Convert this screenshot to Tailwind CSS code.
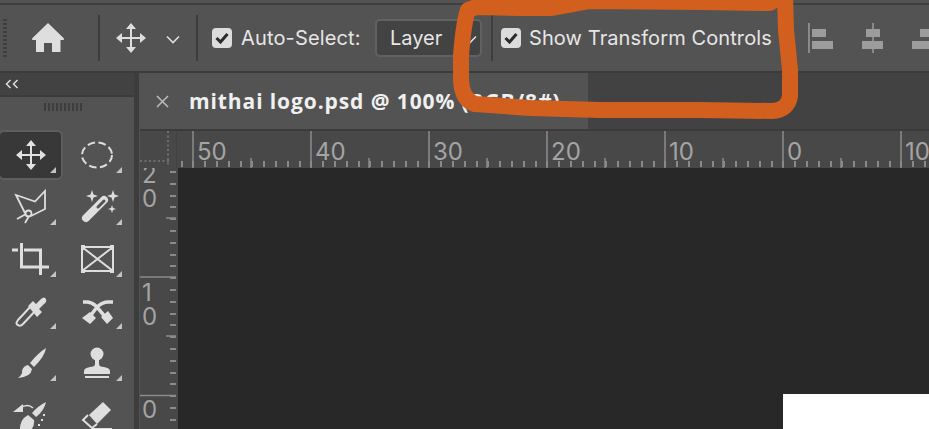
<!DOCTYPE html>
<html>
<head>
<meta charset="utf-8">
<script src="https://cdn.jsdelivr.net/npm/@tailwindcss/browser@4"></script>
</head>
<body class="m-0 bg-[#535353]">
<div class="relative w-[929px] h-[429px] overflow-hidden flex flex-col bg-[#535353] font-['Inter','Liberation_Sans',sans-serif] text-[#e6e6e6]">

  <!-- top strip -->
  <div class="h-[3px] shrink-0 bg-[#535353]"></div>
  <div class="h-[2px] shrink-0 bg-[#3f3f3f]"></div>

  <!-- options bar -->
  <div class="h-[66px] shrink-0 flex items-center bg-[#535353] border-b-2 border-[#3b3b3b] box-content">
    <div class="w-[4px] h-[38px] ml-[3px] shrink-0 bg-[repeating-linear-gradient(to_bottom,#3f3f3f_0,#3f3f3f_2px,transparent_2px,transparent_4px)]"></div>
    <div class="w-[91px] shrink-0 flex justify-start pl-[24px]">
      <svg width="34" height="32" viewBox="31 22 34 32"><path d="M48 23 L64 38.5 Q64.5 40 62.5 40 L60.5 40 L60.5 52 L52 52 L52 43 L44 43 L44 52 L36 52 L36 40 L33.5 40 Q31.5 40 32 38.500 Z" fill="#dedede"/></svg>
    </div>
    <div class="w-[2px] h-[46px] shrink-0 bg-[#3d3d3d]"></div>
    <div class="w-[96px] shrink-0 flex items-center pl-[16px]">
      <svg width="30" height="30" viewBox="0 0 30 30"><path d="M15 4V26M4 15H26" stroke="#dedede" stroke-width="2"/><path d="M15 0L20 6H10ZM15 30L20 24H10ZM0 15L6 10V20ZM30 15L24 10V20Z" fill="#dedede"/></svg>
      <svg class="ml-[20px] mt-[3px]" width="14" height="9" viewBox="0 0 14 9"><path d="M1 1.5L7 7.5L13 1.5" fill="none" stroke="#dedede" stroke-width="1.6"/></svg>
    </div>
    <div class="w-[2px] h-[46px] shrink-0 bg-[#3d3d3d]"></div>
    <div class="flex items-center ml-[14px] shrink-0">
      <span class="w-[20px] h-[20px] rounded-[4px] bg-[#dcdcdc] flex items-center justify-center"><svg width="14" height="12" viewBox="0 0 14 12"><path d="M1.5 6L5.5 10L12.5 2" fill="none" stroke="#2b2b2b" stroke-width="3"/></svg></span>
      <span class="ml-[9px] text-[20px] leading-none tracking-[0.15px] w-[134px]">Auto-Select:</span>
    </div>
    <div class="w-[107px] h-[38px] shrink-0 rounded-[5px] border-2 border-[#616161] bg-[#434343] flex items-center pl-[13px] text-[20px]">Layer
      <svg class="ml-[21px] mt-[3px]" width="14" height="9" viewBox="0 0 14 9"><path d="M1 1.5L7 7.5L13 1.5" fill="none" stroke="#dedede" stroke-width="1.6"/></svg>
    </div>
    <div class="w-[2px] h-[46px] ml-[9px] shrink-0 bg-[#3d3d3d]"></div>
    <div class="flex items-center ml-[8px] shrink-0">
      <span class="w-[20px] h-[20px] rounded-[4px] bg-[#dcdcdc] flex items-center justify-center"><svg width="14" height="12" viewBox="0 0 14 12"><path d="M1.5 6L5.5 10L12.5 2" fill="none" stroke="#2b2b2b" stroke-width="3"/></svg></span>
      <span class="ml-[8px] text-[20px] leading-none tracking-[0.1px] w-[279px] whitespace-nowrap">Show Transform Controls</span>
    </div>
    <svg class="shrink-0" width="121" height="32" viewBox="808 22 121 32">
      <path d="M808.2 23H809.7V53H808.2Z" fill="#9c9c9c"/><path d="M812 29H826V37H812ZM812 41H833V49H812Z" fill="#9c9c9c"/>
      <path d="M872.3 23H873.8V53H872.3Z" fill="#9c9c9c"/><path d="M866 29H880V37H866ZM862 41H883V49H862Z" fill="#9c9c9c"/>
      <path d="M920 29H929V37H920ZM912 41H929V49H912Z" fill="#9c9c9c"/>
    </svg>
  </div>

  <!-- workspace -->
  <div class="flex-1 min-h-0 flex">
    <!-- tools panel -->
    <div class="w-[134px] shrink-0 flex flex-col bg-[#535353]">
      <div class="h-[22px] shrink-0 bg-[#424242] border-b-2 border-[#3b3b3b] box-content flex items-center pl-[5px]">
        <svg width="14" height="10" viewBox="0 0 14 10"><path d="M5.5 1L1.5 5L5.5 9M12.5 1L8.5 5L12.5 9" fill="none" stroke="#dedede" stroke-width="1.5"/></svg>
      </div>
      <div class="h-[32px] shrink-0 flex justify-start pl-[44px] pt-[6px]">
        <div class="w-[38px] h-[8px] bg-[repeating-linear-gradient(to_right,#3d3d3d_0,#3d3d3d_2px,transparent_2px,transparent_4px)]"></div>
      </div>
      <div class="grid grid-cols-[66px_66px] auto-rows-[52px] text-[#dedede]">
        <!-- move -->
        <div class="relative">
          <div class="absolute left-[-2px] top-[1px] w-[65px] h-[50px] rounded-[6px] bg-[#383838] border-2 border-[#5e5e5e]"></div>
          <svg class="relative" width="66" height="52" viewBox="0 129 66 52"><path d="M31 144V166M20 155H42" stroke="#e2e2e2" stroke-width="2"/><path d="M31 140L36 146H26ZM31 170L36 164H26ZM16 155L22 150V160ZM46 155L40 150V160Z" fill="#e2e2e2"/><path d="M56 167V173H50Z" fill="#c4c4c4"/></svg>
        </div>
        <!-- ellipse marquee -->
        <svg width="66" height="52" viewBox="66 129 66 52"><ellipse cx="97" cy="155" rx="15" ry="12.5" fill="none" stroke="#dedede" stroke-width="2" stroke-dasharray="7.5 3.5"/><path d="M122 167V173H116Z" fill="#c4c4c4"/></svg>
        <!-- poly lasso -->
        <svg width="66" height="52" viewBox="0 181 66 52"><path d="M25 213 L16 195 L35 201.5 L45 191 V209 L31 216" fill="none" stroke="#dedede" stroke-width="1.8"/><circle cx="28.500" cy="213.500" r="3" fill="none" stroke="#dedede" stroke-width="1.8"/><path d="M26 214L17 219M29 216L25 223" stroke="#dedede" stroke-width="1.8"/><path d="M56 219V225H50Z" fill="#c4c4c4"/></svg>
        <!-- wand -->
        <svg width="66" height="52" viewBox="66 181 66 52"><path d="M86 218L104 200" stroke="#dedede" stroke-width="8" stroke-linecap="round"/><path d="M98 207L104 201" stroke="#535353" stroke-width="3" stroke-linecap="round"/><path d="M92 190L93.500 194.500L98 196L93.500 197.500L92 202L90.500 197.500L86 196L90.500 194.500ZM113 190L114.500 194.500L119 196L114.500 197.500L113 202L111.500 197.500L107 196L111.500 194.500ZM112 205L113 208L116 209L113 210L112 213L111 210L108 209L111 208Z" fill="#dedede"/><path d="M122 219V225H116Z" fill="#c4c4c4"/></svg>
        <!-- crop -->
        <svg width="66" height="52" viewBox="0 233 66 52"><path d="M12 250H18M21.500 243V267H41M24 250H40.500V275M42 267H49" fill="none" stroke="#dedede" stroke-width="3"/><path d="M56 271V277H50Z" fill="#c4c4c4"/></svg>
        <!-- frame -->
        <svg width="66" height="52" viewBox="66 233 66 52"><path d="M82 247H113V271H82ZM82 247L113 271M113 247L82 271" fill="none" stroke="#dedede" stroke-width="2"/><path d="M81 245h4v4h-4zM110 245h4v4h-4zM81 269h4v4h-4zM110 269h4v4h-4z" fill="#dedede"/><path d="M122 271V277H116Z" fill="#c4c4c4"/></svg>
        <!-- eyedropper -->
        <svg width="66" height="52" viewBox="0 285 66 52"><path d="M32 305 L18 320 Q15 324 18 325 Q20 327 23 324 L37 309" fill="none" stroke="#dedede" stroke-width="2"/><path d="M28 306L33 301L36 304L41 299Q44 296 46 299Q47 302 44 304L39 309L42 312L37 317Z" fill="#dedede"/><path d="M56 323V329H50Z" fill="#c4c4c4"/></svg>
        <!-- shuffle -->
        <svg width="66" height="52" viewBox="66 285 66 52"><path d="M83 302H87C95 302 99 310 106 318M113 302H108C100 302 96 308 89 318" fill="none" stroke="#dedede" stroke-width="3.500"/><path d="M113 318L108 311L101 317L107 324ZM82 318L90 312L96 318L90 324Z" fill="#dedede"/><path d="M122 323V329H116Z" fill="#c4c4c4"/></svg>
        <!-- brush -->
        <svg width="66" height="52" viewBox="0 337 66 52"><path d="M46 348Q45 356 34 367L30 363Q38 353 46 348Z" fill="#dedede"/><path d="M28 365L32 369Q31 377 18 378Q23 374 22 371Q23 366 28 365Z" fill="#dedede"/><path d="M56 375V381H50Z" fill="#c4c4c4"/></svg>
        <!-- stamp -->
        <svg width="66" height="52" viewBox="66 337 66 52"><circle cx="97" cy="354" r="6.500" fill="#dedede"/><path d="M95 358H99V364Q99 367 104 367Q110 368 110 371V374H84V371Q84 368 90 367Q95 367 95 364Z" fill="#dedede"/><path d="M85 376H109V378H85Z" fill="#dedede"/><path d="M122 375V381H116Z" fill="#c4c4c4"/></svg>
        <!-- history brush -->
        <svg width="66" height="52" viewBox="0 389 66 52"><path d="M46 402Q44 411 36 417L32 413Q38 406 46 402Z" fill="#dedede"/><path d="M28 415L34 420Q35 428 28 432H20Q19 420 28 415Z" fill="#dedede"/><path d="M13 412L23 404V412Z" fill="#dedede"/><path d="M20 408Q28 403 33 408" fill="none" stroke="#dedede" stroke-width="1.500"/><path d="M43 414h2v2h-2zM41 419h2v2h-2zM38 424h2v2h-2z" fill="#dedede"/></svg>
        <!-- eraser -->
        <svg width="66" height="52" viewBox="66 389 66 52"><path d="M103 402L111 410L97 424L89 415Z" fill="#dedede"/><path d="M88 415L83 420L92 428L97 424" fill="none" stroke="#dedede" stroke-width="2"/><path d="M92 428H112V432H92Z" fill="#dedede"/></svg>
      </div>
    </div>

    <!-- splitter -->
    <div class="w-[5px] shrink-0 bg-[#3d3d3d]"></div>
    <div class="w-px shrink-0 bg-[#535353]"></div>

    <!-- document -->
    <div class="flex-1 min-w-0 flex flex-col">
      <div class="h-[56px] shrink-0 bg-[#424242] flex">
        <div class="w-[448px] h-full bg-[#535353] flex items-center">
          <svg class="ml-[16px] mr-[20px]" width="13" height="13" viewBox="0 0 13 13"><path d="M1 1L12 12M12 1L1 12" stroke="#bdbdbd" stroke-width="1.500"/></svg>
          <span class="text-[21px] tracking-[0.9px] font-bold leading-none text-[#f0f0f0] whitespace-nowrap font-['Open_Sans','Liberation_Sans',sans-serif]">mithai logo.psd @ 100% (RGB/8#)</span>
        </div>
      </div>
      <div class="h-[2px] shrink-0 bg-[#3b3b3b]"></div>
      <!-- horizontal ruler -->
      <svg class="block shrink-0" width="789" height="37" viewBox="140 131 789 37">
        <rect x="140" y="131" width="789" height="37" fill="#484848"/>
        <path d="M168 131V166M140 161H170" stroke="#7a7a7a" stroke-width="1.500" stroke-dasharray="2 2.500" fill="none"/>
        <path d="M176.500 131V168" stroke="#424242"/>
        <g stroke="#8a8a8a" fill="none">
          <path d="M193 131V168M311 131V168M429 131V168M547 131V168M665 131V168M783 131V168M901 131V168" stroke-width="1.500"/>
          <path d="M251 158V168M369 158V168M487 158V168M605 158V168M723 158V168M841 158V168" stroke-width="1.500"/>
          <line x1="180.500" y1="164" x2="929" y2="164" stroke-width="6" stroke-dasharray="2 9.800" shape-rendering="crispEdges"/>
        </g>
        <g fill="#a4a4a4" font-size="24" font-family="Inter, sans-serif" font-weight="400">
          <text x="197" y="160">50</text><text x="315" y="160">40</text><text x="433" y="160">30</text><text x="551" y="160">20</text><text x="669" y="160">10</text><text x="787" y="160">0</text><text x="905" y="160">10</text>
        </g>
      </svg>
      <div class="flex-1 min-h-0 flex">
        <!-- vertical ruler -->
        <svg class="block shrink-0" width="38" height="261" viewBox="140 168 38 261">
          <rect x="140" y="168" width="38" height="261" fill="#484848"/>
          <g stroke="#8a8a8a" fill="none">
            <path d="M140 277H176M140 395.500H176" stroke-width="1.500"/>
            <path d="M166 218H176M166 336H176" stroke-width="1.500"/>
            <line x1="173" y1="171" x2="173" y2="429" stroke-width="6" stroke-dasharray="2 9.800" shape-rendering="crispEdges"/>
          </g>
          <g fill="#a4a4a4" font-size="24" font-family="Inter, sans-serif" font-weight="400">
            <text x="142" y="183">2</text><text x="142" y="207">0</text>
            <text x="142" y="301">1</text><text x="142" y="325">0</text>
            <text x="142" y="418">0</text>
          </g>
        </svg>
        <!-- canvas -->
        <div class="flex-1 min-w-0 bg-[#282828] flex flex-col justify-end items-end">
          <div class="w-[146px] h-[35px] bg-white"></div>
        </div>
      </div>
    </div>
  </div>

  <!-- hand-drawn annotation -->
  <svg class="absolute left-0 top-0 pointer-events-none" width="929" height="429" viewBox="0 0 929 429">
    <path d="M476 7 L520 8 L552 8 L590 1 L700 2 L770 3 L785 -6 L786 30 L790 70 L790 96 Q788 110 772 111 L700 110 L600 110 L530 108 L475 104 Q462 100 461 80 L461 55 Q464 20 468 10 Z" fill="none" stroke="#d35f1e" stroke-width="16" stroke-linejoin="round"/>
  </svg>
</div>
</body>
</html>
